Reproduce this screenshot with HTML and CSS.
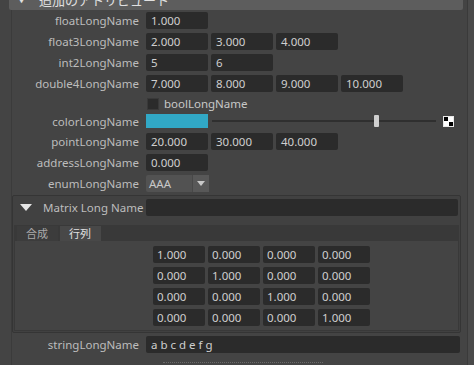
FILE: index.html
```html
<!DOCTYPE html>
<html lang="ja">
<head>
    <meta charset="UTF-8">
    <title>追加のアトリビュート</title>
    <link rel="stylesheet" href="styles.css">
</head>
<body>
    <div class="page">
        <div class="editor">
            <div class="section-head">
                <span class="arrow">▼</span>
                <span class="section-title">追加のアトリビュート</span>
            </div>

            <div class="row">
                <label class="lbl">floatLongName</label>
                <div class="field">1.000</div>
            </div>
            <div class="row">
                <label class="lbl">float3LongName</label>
                <div class="field">2.000</div>
                <div class="field">3.000</div>
                <div class="field">4.000</div>
            </div>
            <div class="row">
                <label class="lbl">int2LongName</label>
                <div class="field">5</div>
                <div class="field">6</div>
            </div>
            <div class="row">
                <label class="lbl">double4LongName</label>
                <div class="field">7.000</div>
                <div class="field">8.000</div>
                <div class="field">9.000</div>
                <div class="field">10.000</div>
            </div>
            <div class="row row-bool">
                <span class="lbl"></span>
                <span class="check"></span>
                <span class="check-text">boolLongName</span>
            </div>
            <div class="row row-color">
                <label class="lbl">colorLongName</label>
                <div class="swatch"></div>
                <div class="slider">
                    <div class="track"></div>
                    <div class="handle"></div>
                </div>
                <svg class="picker" width="11" height="11" viewBox="0 0 11 11">
                    <rect x="0" y="0" width="11" height="11" fill="#e8e8e8"/>
                    <rect x="1" y="1" width="9" height="9" fill="#fff"/>
                    <rect x="1" y="1" width="4" height="4" fill="#000"/>
                    <rect x="6" y="6" width="4" height="4" fill="#000"/>
                </svg>
            </div>
            <div class="row row-after">
                <label class="lbl">pointLongName</label>
                <div class="field">20.000</div>
                <div class="field">30.000</div>
                <div class="field">40.000</div>
            </div>
            <div class="row">
                <label class="lbl">addressLongName</label>
                <div class="field">0.000</div>
            </div>
            <div class="row">
                <label class="lbl">enumLongName</label>
                <div class="combo">
                    <span class="combo-text">AAA</span>
                    <span class="combo-btn">
                        <svg width="8" height="5" viewBox="0 0 8 5"><path d="M0 0 L8 0 L4 5 Z" fill="#c8c8c8"/></svg>
                    </span>
                </div>
            </div>

            <div class="frame">
                <div class="frame-head">
                    <svg class="frame-arrow" width="12" height="7" viewBox="0 0 12 7"><path d="M0 0 L12 0 L6 7 Z" fill="#e6e6e6"/></svg>
                    <span class="frame-title">Matrix Long Name</span>
                    <div class="wide-field"></div>
                </div>
                <div class="tabs">
                    <span class="tab">合成</span>
                    <span class="tab active">行列</span>
                </div>
                <div class="tab-pane">
                    <div class="grid">
                        <div class="cell">1.000</div><div class="cell">0.000</div><div class="cell">0.000</div><div class="cell">0.000</div>
                        <div class="cell">0.000</div><div class="cell">1.000</div><div class="cell">0.000</div><div class="cell">0.000</div>
                        <div class="cell">0.000</div><div class="cell">0.000</div><div class="cell">1.000</div><div class="cell">0.000</div>
                        <div class="cell">0.000</div><div class="cell">0.000</div><div class="cell">0.000</div><div class="cell">1.000</div>
                    </div>
                </div>
            </div>

            <div class="row row-string">
                <label class="lbl">stringLongName</label>
                <div class="field text-field">a b c d e f g</div>
            </div>
            <div class="dots"></div>
        </div>
        <div class="scrollbar"></div>
    </div>
</body>
</html>
```

FILE: styles.css
```css
body {
    margin: 0;
    padding: 0;
    background-color: #444444;
    font-family: "Noto Sans", "Noto Sans CJK JP", sans-serif;
    font-size: 11px;
    color: #c8c8c8;
    overflow: hidden;
}

.page {
    display: flex;
    height: 365px;
}

.editor {
    flex: 1;
    border-left: 1px solid #3b3b3b;
    margin-left: 11px;
    padding-right: 4px;
}

.scrollbar {
    width: 6px;
    background-color: #4a4a4a;
    border-left: 1px solid #3a3a3a;
}

/* bandeau de section, coupé en haut */
.section-head {
    display: flex;
    align-items: center;
    height: 22px;
    margin-top: -12px;
    margin-left: -3px;
    background-color: #5d5d5d;
    color: #e0e0e0;
    font-size: 13px;
    border-radius: 0 0 2px 2px;
}

.arrow {
    font-size: 9px;
    margin-left: 8px;
    width: 22px;
}

.row {
    display: flex;
    align-items: center;
    height: 17px;
    margin-top: 4px;
    gap: 3px;
}

.section-head + .row {
    margin-top: 2px;
}

.row-bool {
    height: 13px;
    margin-top: 5px;
}

.row-color {
    height: 14px;
    margin-top: 4px;
}

.row-after {
    margin-top: 5px;
}

.row-string {
    margin-top: 3px;
}

.lbl {
    width: 127px;
    margin-right: 4px;
    text-align: right;
    color: #bdbdbd;
    font-size: 11.5px;
    white-space: nowrap;
}

.field {
    width: 57px;
    height: 17px;
    line-height: 17px;
    padding-left: 5px;
    background-color: #2b2b2b;
    color: #cfcfcf;
    border-radius: 2px;
    font-size: 11.5px;
}

.text-field {
    flex: 1;
    margin-right: 3px;
}

.check {
    width: 10px;
    height: 10px;
    margin-left: 1px;
    background-color: #2b2b2b;
    border: 1px solid #393939;
}

.check-text {
    margin-left: 2px;
    font-size: 11.5px;
    line-height: 13px;
}

.swatch {
    width: 62px;
    height: 14px;
    background-color: #31a8c6;
}

.slider {
    position: relative;
    width: 224px;
    height: 14px;
    margin-left: 1px;
    display: flex;
    align-items: center;
}

.track {
    width: 100%;
    height: 2px;
    background-color: #2f2f2f;
}

.handle {
    position: absolute;
    left: 162px;
    top: 1px;
    width: 5px;
    height: 12px;
    background-color: #cfcfcf;
    border-radius: 1px;
}

.picker {
    margin-left: 4px;
}

.combo {
    display: flex;
    width: 63px;
    height: 17px;
    background-color: #525252;
    border-radius: 2px;
}

.combo-text {
    flex: 1;
    padding-left: 3px;
    line-height: 17px;
    font-size: 11.5px;
}

.combo-btn {
    width: 16px;
    display: flex;
    align-items: center;
    justify-content: center;
    border-left: 1px solid #484848;
    background-color: #585858;
}

/* cadre de la matrice */
.frame {
    margin-top: 3px;
    margin-right: 2px;
    border: 1px solid #353535;
    border-radius: 2px;
    background-color: #414141;
    padding: 3px 1px 1px 1px;
}

.frame-head {
    display: flex;
    align-items: center;
    height: 17px;
}

.frame-arrow {
    flex: none;
    margin-left: 6px;
}

.frame-title {
    flex: none;
    margin-left: 11px;
    width: 103px;
    white-space: nowrap;
    color: #bdbdbd;
    font-size: 11.5px;
}

.wide-field {
    flex: 1;
    height: 17px;
    margin-right: 1px;
    background-color: #2b2b2b;
    border-radius: 2px;
}

.tabs {
    display: flex;
    margin-top: 9px;
    background-color: #393939;
    height: 16px;
    align-items: flex-end;
    padding-left: 3px;
    gap: 2px;
}

.tab {
    width: 41px;
    height: 15px;
    line-height: 15px;
    padding-left: 9px;
    box-sizing: border-box;
    background-color: #3c3c3c;
    color: #aaaaaa;
    font-size: 11px;
}

.tab.active {
    background-color: #484848;
    color: #e0e0e0;
}

.tab-pane {
    border: 1px solid #393939;
    border-top: none;
    background-color: #444444;
    padding: 5px 0 4px 138px;
}

.grid {
    display: grid;
    grid-template-columns: repeat(4, 52px);
    grid-auto-rows: 17px;
    gap: 4px 3px;
}

.cell {
    background-color: #2b2b2b;
    line-height: 17px;
    padding-left: 4px;
    border-radius: 2px;
    color: #cfcfcf;
    font-size: 11.5px;
}

.dots {
    margin-top: 9px;
    margin-left: 151px;
    width: 160px;
    height: 1px;
    border-top: 1px dotted #6a6a6a;
}
```
